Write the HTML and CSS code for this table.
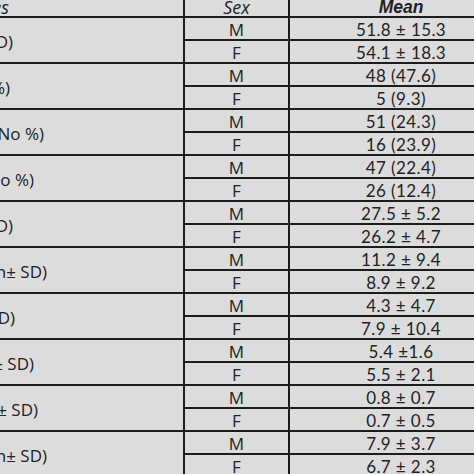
FILE: index.html
```html
<!DOCTYPE html>
<html>
<head>
<meta charset="utf-8">
<link rel="stylesheet" href="styles.css">
</head>
<body>
<div class="table">
  <div class="cell head lab end-9"><span>Variables</span></div>
  <div class="cell head sex">Sex</div>
  <div class="cell head mean">Mean</div>

  <div class="cell lab end-13"><span>Age (mean ± SD)</span></div>
  <div class="cell sex">M</div><div class="cell val">51.8 ± 15.3</div>
  <div class="cell sex">F</div><div class="cell val">54.1 ± 18.3</div>

  <div class="cell lab end-10"><span>Smokers (No %)</span></div>
  <div class="cell sex">M</div><div class="cell val">48 (47.6)</div>
  <div class="cell sex">F</div><div class="cell val">5 (9.3)</div>

  <div class="cell lab end-44"><span>Hypertension (No %)</span></div>
  <div class="cell sex">M</div><div class="cell val">51 (24.3)</div>
  <div class="cell sex">F</div><div class="cell val">16 (23.9)</div>

  <div class="cell lab end-34"><span>Diabetes (No %)</span></div>
  <div class="cell sex">M</div><div class="cell val">47 (22.4)</div>
  <div class="cell sex">F</div><div class="cell val">26 (12.4)</div>

  <div class="cell lab end-13"><span>BMI (mean ± SD)</span></div>
  <div class="cell sex">M</div><div class="cell val">27.5 ± 5.2</div>
  <div class="cell sex">F</div><div class="cell val">26.2 ± 4.7</div>

  <div class="cell lab end-47"><span>Disease duration (mean± SD)</span></div>
  <div class="cell sex">M</div><div class="cell val">11.2 ± 9.4</div>
  <div class="cell sex">F</div><div class="cell val">8.9 ± 9.2</div>

  <div class="cell lab end-15"><span>Pain score (mean ± SD)</span></div>
  <div class="cell sex">M</div><div class="cell val">4.3 ± 4.7</div>
  <div class="cell sex">F</div><div class="cell val">7.9 ± 10.4</div>

  <div class="cell lab end-34"><span>Fatigue score (mean ± SD)</span></div>
  <div class="cell sex">M</div><div class="cell val">5.4 ±1.6</div>
  <div class="cell sex">F</div><div class="cell val">5.5 ± 2.1</div>

  <div class="cell lab end-38"><span>Relapses (mean ± SD)</span></div>
  <div class="cell sex">M</div><div class="cell val">0.8 ± 0.7</div>
  <div class="cell sex">F</div><div class="cell val">0.7 ± 0.5</div>

  <div class="cell lab end-47"><span>Sleep hours (mean± SD)</span></div>
  <div class="cell sex">M</div><div class="cell val">7.9 ± 3.7</div>
  <div class="cell sex">F</div><div class="cell val">6.7 ± 2.3</div>
</div>
</body>
</html>
```

FILE: styles.css
```css
html, body {
  margin: 0;
  padding: 0;
  background: #dcdcdc;
  overflow: hidden;
}

.table {
  display: grid;
  grid-template-columns: 183px 103px 222px;
  grid-template-rows: 16px repeat(20, 21px);
  gap: 2px;
  background: #1c1c1c;
  width: 512px;
  color: #222222;
}

.cell {
  background: #dcdcdc;
  display: flex;
  align-items: center;
  justify-content: center;
  white-space: nowrap;
  font-family: "Open Sans", "Liberation Sans", sans-serif;
  font-size: 17px;
  line-height: 21px;
}

.lab {
  grid-column: 1;
  grid-row: span 2;
  justify-content: flex-end;
  font-size: 17px;
  padding-top: 2px;
}

.lab span { flex: none; }

.end-9 { padding-right: 174px; }
.end-10 { padding-right: 173px; }
.end-13 { padding-right: 170px; }
.end-15 { padding-right: 168px; }
.end-34 { padding-right: 149px; }
.end-38 { padding-right: 145px; }
.end-44 { padding-right: 139px; }
.end-47 { padding-right: 136px; }

.sex {
  grid-column: 2;
  padding-top: 1px;
}

.val {
  grid-column: 3;
  font-family: Lato, "Liberation Sans", sans-serif;
  font-size: 17px;
  letter-spacing: 0.4px;
  padding-top: 2px;
}

.head {
  grid-row: 1;
  align-items: flex-start;
  line-height: 10px;
  font-style: italic;
  font-size: 18px;
  padding-top: 2px;
}

.head.lab { grid-row: 1; }

.head.mean {
  grid-column: 3;
  font-family: "Liberation Sans", Arial, sans-serif;
  font-weight: bold;
  font-size: 17.5px;
  padding-top: 2px;
}
```
